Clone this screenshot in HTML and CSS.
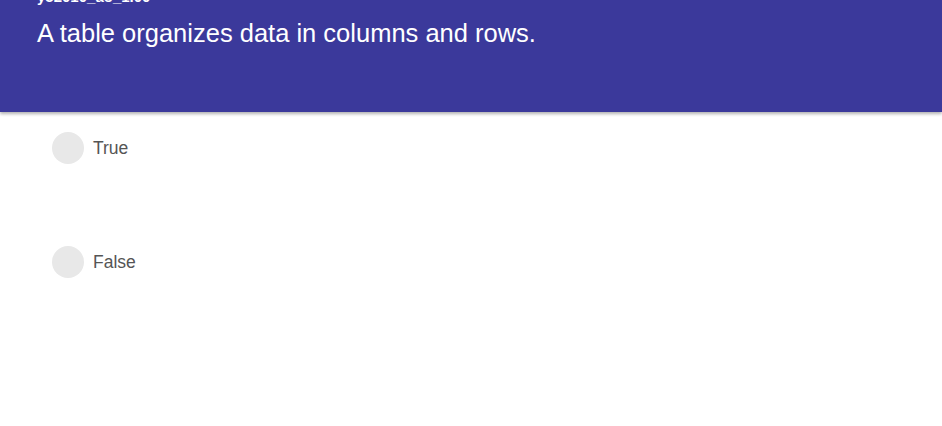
FILE: index.html
```html
<!DOCTYPE html>
<html>
<head>
<meta charset="utf-8">
<link rel="stylesheet" href="styles.css">
</head>
<body>
<header class="header">
  <div class="qid">y52010_ao_1.00</div>
  <h1 class="question">A table organizes data in columns and rows.</h1>
</header>
<main class="options">
  <label class="option"><span class="radio"></span><span class="label">True</span></label>
  <label class="option"><span class="radio"></span><span class="label">False</span></label>
</main>
</body>
</html>
```
FILE: styles.css
```css
html, body {
  margin: 0;
  padding: 0;
  background: #ffffff;
  font-family: "Liberation Sans", Arial, sans-serif;
}
.header {
  background: #3b399b;
  height: 112px;
  box-sizing: border-box;
  padding: 0 37px;
  box-shadow: 0 2px 3px rgba(0, 0, 0, 0.3);
  overflow: hidden;
}
.qid {
  color: #ffffff;
  font-weight: bold;
  font-size: 15px;
  line-height: 16px;
  margin-top: -11px;
}
.question {
  margin: 13px 0 0 0;
  color: #ffffff;
  font-weight: normal;
  font-size: 25.5px;
  line-height: 30px;
}
.options {
  display: flex;
  flex-direction: column;
  gap: 82px;
  padding: 20px 0 0 52px;
}
.option {
  display: flex;
  align-items: center;
  gap: 9px;
  height: 32px;
}
.radio {
  width: 32px;
  height: 32px;
  border-radius: 50%;
  background: #e8e8e8;
}
.label {
  color: #555555;
  font-size: 17.5px;
}
```
